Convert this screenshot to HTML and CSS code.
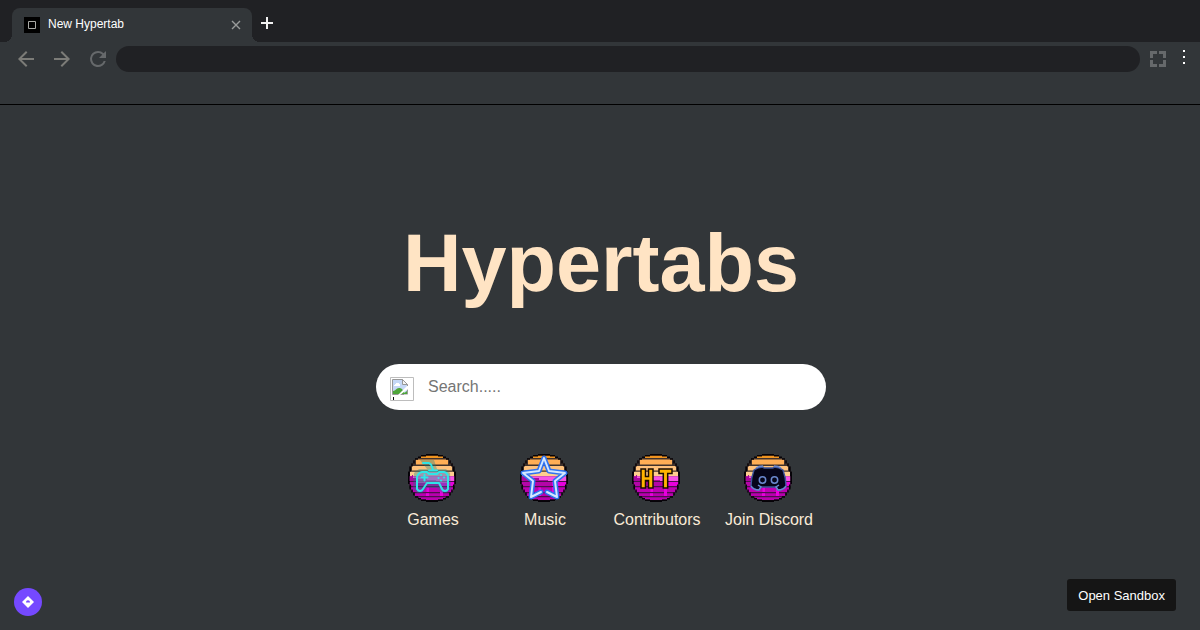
FILE: index.html
```
<!DOCTYPE html>
<html lang="en">
  <head>
    <meta charset="UTF-8" />
    <meta name="viewport" content="width=device-width, initial-scale=1.0" />
    <title>New Hypertab</title>
    <link rel="stylesheet" href="styles.css">
  </head>
  <body>
    <!-- Shared sunset disc behind every shortcut icon -->
    <svg class="defs" aria-hidden="true">
      <defs>
        <clipPath id="disc">
          <path d="M18 0h12v1.500h5v1.500h3v1.500h3v2h2v3h2v3h1.500v5h1.500v12h-1.500v5h-1.500v3h-2v3h-2v2h-3v1.500h-3v1.500h-5v1.500h-12v-1.500h-5v-1.500h-3v-1.500h-3v-2h-2v-3h-2v-3h-1.500v-5h-1.500v-12h1.500v-5h1.500v-3h2v-3h2v-2h3v-1.500h3v-1.500h5z" />
        </clipPath>
        <symbol id="sunset" viewBox="0 0 48 48">
          <g clip-path="url(#disc)">
            <path fill="#0c070d" d="M0 0h48v48H0z" />
            <path fill="#40322c" d="M2 2h44v20H2z" />
            <path fill="#4d0f4c" d="M2 22h44v24H2z" />
            <path fill="#f0941f" d="M13 1.500h22V4H13z" />
            <path fill="#ffae55" d="M8 5.500h32v5H8z" />
            <path fill="#ffc27c" d="M4 12h40v4.500H4z" />
            <path fill="#ffce8e" d="M2 17.700h44v4.500H2z" />
            <path fill="#f653e4" d="M1.500 22.200h45V27h-45z" />
            <path fill="#a8079c" d="M1.500 22.200H4V21h1v3h3v1h5v-1h6v2h9v1H1.500z" />
            <path fill="#b505a8" d="M1.500 28h45v4h-45z" />
            <path fill="#e800dd" d="M32 28h14v4H32zM18 33.300h3V38h-3z" />
            <path fill="#bd00b3" d="M2.500 33.300h16V38h-16zM21 33.300h24V38H21z" />
            <path fill="#b800ae" d="M6 39.200h36V42H6zM11 43.200h26V46H11z" />
            <path fill="#e800dd" d="M18 39.200h3V42h-3zM32 33.300h3V42h-3z" />
          </g>
          <path
            d="M18 .7h12M30 1.700h5M35 3.200h3M38 5h3M42 6.500v3M44 9.500v3M45.700 12.500v5M47.200 18v12M45.700 30.500v5M44 35.500v3M42 38.500v3M41 43h-3M38 44.800h-3M35 46.300h-5M30 47.300H18M18 46.300h-5M13 44.800h-3M10 43H7M6 41.500v-3M4 38.500v-3M2.300 35.500v-5M.8 30V18M2.300 17.500v-5M4 12.500v-3M6 9.500v-3M7 5h3M10 3.200h3M13 1.700h5"
            fill="none"
            stroke="#060308"
            stroke-width="1.500"
          />
        </symbol>
      </defs>
    </svg>

    <header class="browser">
      <div class="tab-bar">
        <div class="tab">
          <svg class="tab-icon" viewBox="0 0 16 16">
            <path fill="#000" d="M0 0h16v16H0z" />
            <path fill="none" stroke="#a9aaa6" d="M4.500 4.500h7v7h-7z" />
          </svg>
          <span class="tab-title">New Hypertab</span>
          <button class="tab-close" aria-label="Close tab">
            <svg viewBox="0 0 12 12">
              <path d="M2 2l8 8M10 2l-8 8" />
            </svg>
          </button>
        </div>
        <button class="tab-new" aria-label="New tab">
          <svg viewBox="0 0 12 12"><path d="M6 0v12M0 6h12" /></svg>
        </button>
      </div>

      <div class="toolbar">
        <button class="tool nav" aria-label="Back">
          <svg viewBox="0 0 24 24">
            <path d="M20 11H7.830l5.590-5.590L12 4l-8 8 8 8 1.410-1.410L7.830 13H20v-2z" />
          </svg>
        </button>
        <button class="tool nav" aria-label="Forward">
          <svg viewBox="0 0 24 24">
            <path d="M12 4l-1.410 1.410L16.170 11H4v2h12.170l-5.580 5.590L12 20l8-8z" />
          </svg>
        </button>
        <button class="tool" aria-label="Reload">
          <svg viewBox="0 0 24 24">
            <path d="M17.650 6.350A7.960 7.960 0 0 0 12 4a8 8 0 1 0 7.730 10h-2.080A6 6 0 1 1 12 6c1.660 0 3.140.69 4.220 1.780L13 11h7V4l-2.350 2.350z" />
          </svg>
        </button>
        <input class="address" type="text" aria-label="Address" />
        <button class="tool fullscreen" aria-label="Full screen">
          <svg viewBox="0 0 16 16">
            <path d="M0 0h7v3H3v4H0zM9 0h7v7h-3V3H9zM0 9h3v4h4v3H0zM13 9h3v7H9v-3h4z" />
          </svg>
        </button>
        <button class="tool menu" aria-label="Menu">
          <svg viewBox="0 0 2 14">
            <path d="M0 0h2v2H0zM0 6h2v2H0zM0 12h2v2H0z" />
          </svg>
        </button>
      </div>
    </header>

    <main class="home">
      <h1 class="logo">Hypertabs</h1>

      <form class="search">
        <svg class="search-icon" viewBox="0 0 24 24">
          <path fill="#fff" stroke="#bdbdbd" d="M.5.5h23v23H.5z" />
          <path fill="#c5d8f6" stroke="#989898" d="M2.500 2.500h10l5 5v10h-15z" />
          <path fill="#f4f4f4" stroke="#989898" d="M12.500 2.500v5h5z" />
          <path fill="#fff" d="M4 9V8h1V7h1V6h3v1h1v2z" />
          <path fill="#4fa63a" d="M3 17v-3c3 0 3-3 6-3 3 0 4 2 6 6z" />
          <path fill="#fff" d="M19 9v2l-9 7H8l5-5 4-4z" />
          <path fill="#4fa63a" d="M17 14v3h-4z" />
          <path fill="#fff" d="M14 17.500h5V18h-5zM17.500 9H19v4h-1.500z" />
          <path fill="#111" d="M3 20h1v3H3z" />
        </svg>
        <input class="search-input" type="text" placeholder="Search....." aria-label="Search" />
      </form>

      <nav class="shortcuts">
        <a class="shortcut" href="#">
          <svg class="shortcut-icon" viewBox="0 0 48 48">
            <use href="#sunset" />
            <path fill="#15808a" fill-opacity=".35" d="M12 6h14l3 9h9l4 4 1 16-4 4h-5l-5-5H19l-5 5H9l-4-4 1-16 5-4h8z" />
            <path fill="#9a7fc0" fill-opacity=".6" d="M12 18h24l3 3v8H9v-8z" />
            <g class="neon-teal">
              <path id="pad" d="M15 9h6l2 1.500 2 5M21 16.500h8M14 18h5l2 2h8l2-2h5q4 1 4 5v12q-1 2-3 2-2 0-3-2l-3-6H19l-4 6q-1 2-3 2-2 0-3-2V23q1-4 5-5z" />
              <path d="M16.500 20.500v6M13.500 23.500h6" />
              <path d="M33 21h.1M36 23.500h.1M30.500 24h.1M33 26.500h.1" />
            </g>
          </svg>
          <span class="shortcut-label">Games</span>
        </a>
        <a class="shortcut" href="#">
          <svg class="shortcut-icon" viewBox="0 0 48 48">
            <use href="#sunset" />
            <g class="neon-star">
              <path class="glow" d="M27 38l10 5-2-16 10-8-16-2-5-13-5 13-16 2 10 8-2 16 10-5" />
              <path d="M27 38l10 5-2-16 10-8-16-2-5-13-5 13-16 2 10 8-2 16 10-5" />
            </g>
          </svg>
          <span class="shortcut-label">Music</span>
        </a>
        <a class="shortcut" href="#">
          <svg class="shortcut-icon" viewBox="0 0 48 48">
            <use href="#sunset" />
            <!-- block monogram -->
            <g fill="#ffb400" stroke="#1a0c02" stroke-width="1.500">
              <path d="M9 15h4.500v7.500h3V15H21v19h-4.500v-7.500h-3V34H9z" />
              <path d="M27 15h13v4.500h-4.300V34h-4.400V19.500H27z" />
            </g>
          </svg>
          <span class="shortcut-label">Contributors</span>
        </a>
        <a class="shortcut" href="#">
          <svg class="shortcut-icon" viewBox="0 0 48 48">
            <use href="#sunset" />
            <path
              fill="#06051a"
              stroke="#3e569b"
              stroke-width="1.400"
              stroke-linejoin="round"
              d="M10 16q4-3 9-3l1 1h9l1-1q5 0 9 3 3 8 3 16-3 4-8 4l-2-3H17l-2 3q-5 0-8-4 0-8 3-16z"
            />
            <path class="mascot-line" d="M12 14q3-2 7-2M37 14q-3-2-7-2M7 32q2 4 8 4l2-3-3-2M42 32q-2 4-8 4l-2-3 3-2" />
            <g class="mascot-line">
              <circle cx="18.500" cy="26" r="3.200" />
              <circle cx="30.500" cy="26" r="3.200" />
            </g>
          </svg>
          <span class="shortcut-label">Join Discord</span>
        </a>
      </nav>
    </main>

    <button class="preview-badge" aria-label="Preview tools">
      <svg viewBox="0 0 12 12">
        <path fill="#fff" d="M6 0l6 6-6 6-6-6z" />
        <path fill="#7549ff" d="M4 6.500c0-3 4-3 4 0z" />
      </svg>
    </button>
    <button class="open-sandbox">Open Sandbox</button>
  </body>
</html>
```
FILE: styles.css
```
* {
  box-sizing: border-box;
}

body {
  margin: 0;
  min-height: 100vh;
  background-color: #323639;
  font-family: "Liberation Sans", Arial, Helvetica, sans-serif;
}

button {
  display: flex;
  align-items: center;
  justify-content: center;
  padding: 0;
  border: none;
  background: none;
  font-family: inherit;
  cursor: pointer;
}

.defs {
  position: absolute;
  width: 0;
  height: 0;
}

/* browser bar */
.browser {
  border-bottom: 1px solid #000;
}

.tab-bar {
  display: flex;
  height: 42px;
  padding: 8px 12px 0;
  background-color: #202124;
}

.tab {
  position: relative;
  display: flex;
  align-items: center;
  width: 240px;
  padding: 0 10px 0 12px;
  border-radius: 8px 8px 0 0;
  background-color: #323639;
}

/* curved feet of the active tab */
.tab::before,
.tab::after {
  content: "";
  position: absolute;
  bottom: 0;
  width: 8px;
  height: 8px;
}

.tab::before {
  right: 100%;
  background: radial-gradient(circle at 0 0, #202124 8px, #323639 8px);
}

.tab::after {
  left: 100%;
  background: radial-gradient(circle at 100% 0, #202124 8px, #323639 8px);
}

.tab-icon {
  width: 16px;
  height: 16px;
  margin-right: 8px;
}

.tab-title {
  flex: 1;
  padding-bottom: 2px;
  color: #fff;
  font-size: 12px;
  line-height: 16px;
}

.tab-close svg {
  width: 12px;
  height: 12px;
  fill: none;
  stroke: #9a9c9b;
  stroke-width: 1.4;
}

.tab-new {
  width: 30px;
  height: 30px;
}

.tab-new svg {
  width: 12px;
  height: 12px;
  stroke: #f1f1f1;
  stroke-width: 2;
}

.toolbar {
  display: flex;
  align-items: flex-start;
  height: 62px;
  padding: 4px 8px 0;
}

.tool {
  width: 36px;
  height: 26px;
}

.tool svg {
  width: 24px;
  height: 24px;
  fill: #66696b;
}

.nav svg {
  fill: #7c7c78;
}

.address {
  flex: 1;
  min-width: 0;
  height: 26px;
  padding: 0 14px;
  border: none;
  border-radius: 13px;
  outline: none;
  background-color: #202124;
  color: #fff;
}

.tool.fullscreen svg {
  width: 16px;
  height: 16px;
}

.tool.menu {
  width: 16px;
  height: 22px;
}

.tool.menu svg {
  width: 2px;
  height: 14px;
  fill: #fff;
}

/* start page */
.home {
  display: flex;
  flex-direction: column;
  align-items: center;
  padding: 108px 0 0 2px;
}

.logo {
  margin: 0;
  color: bisque;
  font-size: 81px;
  line-height: 100px;
}

.search {
  display: flex;
  align-items: center;
  width: 450px;
  max-width: 100%;
  height: 46px;
  margin-top: 51px;
  padding: 0 14px;
  border-radius: 23px;
  background-color: #fff;
}

.search-icon {
  width: 24px;
  height: 24px;
  margin: 4px 14px 0 0;
}

.search-input {
  flex: 1;
  min-width: 0;
  padding: 0;
  border: none;
  outline: none;
  background: none;
  font-family: inherit;
  font-size: 16px;
}

.search-input::placeholder {
  color: #757575;
}

.shortcuts {
  display: flex;
  margin-top: 44px;
}

.shortcut {
  display: flex;
  flex-direction: column;
  align-items: center;
  width: 112px;
  color: antiquewhite;
  font-size: 16px;
  line-height: 20px;
  text-decoration: none;
}

.shortcut-icon {
  width: 48px;
  height: 48px;
  margin: 0 2px 8px 0;
}

.neon-teal {
  fill: none;
  stroke: #2ee6e8;
  stroke-width: 2;
  stroke-linecap: round;
  stroke-linejoin: round;
}

.neon-star {
  fill: none;
  stroke: #d4e8ff;
  stroke-width: 2;
  stroke-linecap: round;
  stroke-linejoin: round;
}

.neon-star .glow {
  stroke: #2f72f0;
  stroke-width: 5;
}

.mascot-line {
  fill: none;
  stroke: #6a88cf;
  stroke-width: 1.5;
}

/* floating buttons */
.preview-badge {
  position: fixed;
  left: 14px;
  bottom: 14px;
  width: 28px;
  height: 28px;
  border-radius: 50%;
  background-color: #7549ff;
}

.preview-badge svg {
  width: 12px;
  height: 12px;
}

.open-sandbox {
  position: fixed;
  right: 24px;
  bottom: 19px;
  height: 32px;
  padding: 0 11px;
  border-radius: 3px;
  background-color: #151515;
  color: #fff;
  font-size: 13px;
}
```
